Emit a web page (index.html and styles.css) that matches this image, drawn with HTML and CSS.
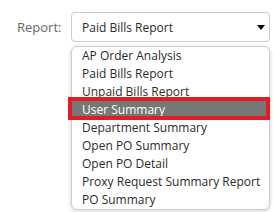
FILE: index.html
```html
<!DOCTYPE html>
<html lang="en">
<head>
  <meta charset="UTF-8">
  <title>Report Picker</title>
  <link rel="stylesheet" href="styles.css">
</head>
<body>
  <div class="report-field">
    <label class="field-label">Report:</label>
    <div class="picker">
      <div class="picker-box">
        <span class="picker-value">Paid Bills Report</span>
        <span class="picker-arrow"></span>
      </div>
      <!-- open dropdown -->
      <ul class="picker-list">
        <li class="picker-item">AP Order Analysis</li>
        <li class="picker-item">Paid Bills Report</li>
        <li class="picker-item">Unpaid Bills Report</li>
        <li class="picker-item active">User Summary</li>
        <li class="picker-item">Department Summary</li>
        <li class="picker-item">Open PO Summary</li>
        <li class="picker-item">Open PO Detail</li>
        <li class="picker-item">Proxy Request Summary Report</li>
        <li class="picker-item">PO Summary</li>
      </ul>
    </div>
  </div>
</body>
</html>
```

FILE: styles.css
```css
:root {
  --text-color: #2b2b2b;
  --label-color: #666666;
  --border-color: #cccccc;
  --active-bg: #777777;
  --mark-color: #e31d25;
}

* {
  margin: 0;
  padding: 0;
  box-sizing: border-box;
  font-family: 'Open Sans', 'Liberation Sans', sans-serif;
}

body {
  background-color: #ffffff;
  width: 274px;
  height: 212px;
  overflow: hidden;
}

.report-field {
  display: flex;
  align-items: flex-start;
  padding: 12px 4px 0 17px;
}

.field-label {
  font-size: 13px;
  color: var(--label-color);
  line-height: 30px;
  width: 54px;
  flex-shrink: 0;
}

.picker {
  width: 199px;
  display: flex;
  flex-direction: column;
  gap: 4px;
}

.picker-box {
  height: 30px;
  border: 1px solid var(--border-color);
  border-radius: 4px;
  display: flex;
  align-items: center;
  justify-content: space-between;
  padding: 0 4px 0 10px;
  font-size: 12px;
  color: var(--text-color);
}

.picker-arrow {
  width: 0;
  height: 0;
  border-left: 4px solid transparent;
  border-right: 4px solid transparent;
  border-top: 5px solid #000000;
}

.picker-list {
  list-style: none;
  border: 1px solid var(--border-color);
  border-radius: 6px;
  box-shadow: 0 1px 4px rgba(0, 0, 0, 0.18);
  background-color: #ffffff;
}

.picker-item {
  height: 18px;
  line-height: 18px;
  padding-left: 10px;
  font-size: 12px;
  color: var(--text-color);
  white-space: nowrap;
}

.picker-item.active {
  position: relative;
  background-color: var(--active-bg);
  color: #ffffff;
}

/* red callout box drawn over the selected row */
.picker-item.active::after {
  content: '';
  position: absolute;
  left: -4px;
  right: -1px;
  top: -4px;
  bottom: -1px;
  border: 4px solid var(--mark-color);
}
```
